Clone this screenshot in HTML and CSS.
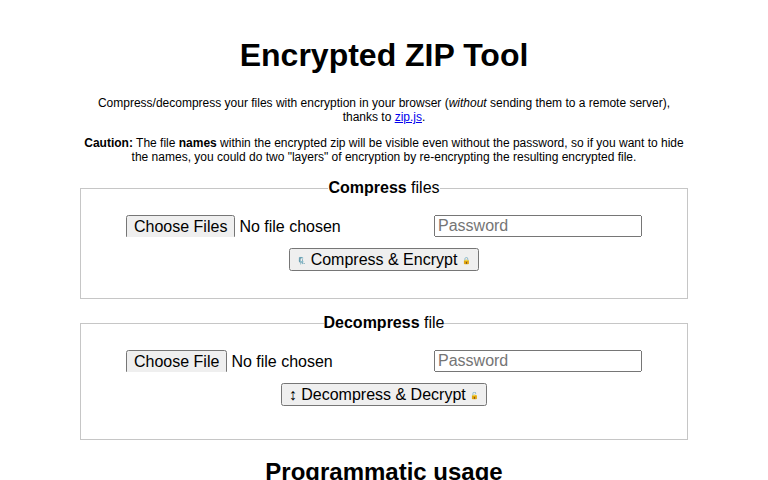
FILE: index.html
```html
<!DOCTYPE html>
<html lang="en">

<head>
    <meta charset="UTF-8">
    <meta name="viewport" content="width=device-width, initial-scale=1.0">
    <title>Encrypted ZIP Tool</title>
    <link rel="stylesheet" href="styles.css">
</head>

<body>
    <div class="page">
        <h1>Encrypted ZIP Tool</h1>
        <p class="intro">Compress/decompress your files with encryption in your browser (<em>without</em> sending them to a remote server), thanks to <a href="#">zip.js</a>.</p>
        <p class="intro"><strong>Caution:</strong> The file <strong>names</strong> within the encrypted zip will be visible even without the password, so if you want to hide the names, you could do two "layers" of encryption by re-encrypting the resulting encrypted file.</p>

        <fieldset class="tool">
            <legend><strong>Compress</strong> files</legend>
            <div class="row">
                <input class="file" type="file" multiple>
                <input class="pass" type="password" placeholder="Password">
            </div>
            <div class="row">
                <button class="go"><span class="emo">&#x1F5DC;&#xFE0F;</span> Compress &amp; Encrypt <span class="emo">&#x1F512;</span></button>
            </div>
        </fieldset>

        <fieldset class="tool decomp">
            <legend><strong>Decompress</strong> file</legend>
            <div class="row">
                <input class="file" type="file">
                <input class="pass" type="password" placeholder="Password">
            </div>
            <div class="row">
                <button class="go">&#x2195; Decompress &amp; Decrypt <span class="emo">&#x1F513;</span></button>
            </div>
        </fieldset>

        <h2>Programmatic usage</h2>
    </div>
</body>

</html>
```

FILE: styles.css
```css
* {
    box-sizing: border-box;
}

body {
    margin: 0;
    font-family: "Liberation Sans", Arial, sans-serif;
    color: #000;
    background: #fff;
}

.page {
    width: 612px;
    margin: 0 auto;
    padding-top: 37px;
    text-align: center;
}

h1 {
    margin: 0 0 22px;
    font-size: 32px;
}

.intro {
    margin: 0 0 12px;
    padding: 0 6px;
    font-size: 12px;
}

.intro a {
    color: #0000ee;
}

.tool {
    margin: 15px 2px 0;
    padding: 18px 0 27px;
    border: 1px solid #c6c6c6;
    font-size: 16px;
}

.tool + .tool {
    margin-top: 15px;
}

.tool.decomp {
    padding-bottom: 33px;
}

.tool legend {
    padding: 0;
    margin: 0 auto;
    font-size: 16px;
}

.row {
    display: flex;
    justify-content: center;
    align-items: center;
    gap: 8px;
}

.row + .row {
    margin-top: 11px;
}

.row input,
.row button {
    font-family: inherit;
    font-size: 16px;
}

.go {
    height: 23px;
    padding: 0 6px;
    line-height: 19px;
}

.go .emo {
    font-size: 7px;
    vertical-align: 2px;
}

.file {
    width: 300px;
    height: 22px;
    text-align: left;
}

.pass {
    width: 208px;
    height: 22px;
}

h2 {
    margin: 18px 0 0;
    font-size: 24px;
}
```
